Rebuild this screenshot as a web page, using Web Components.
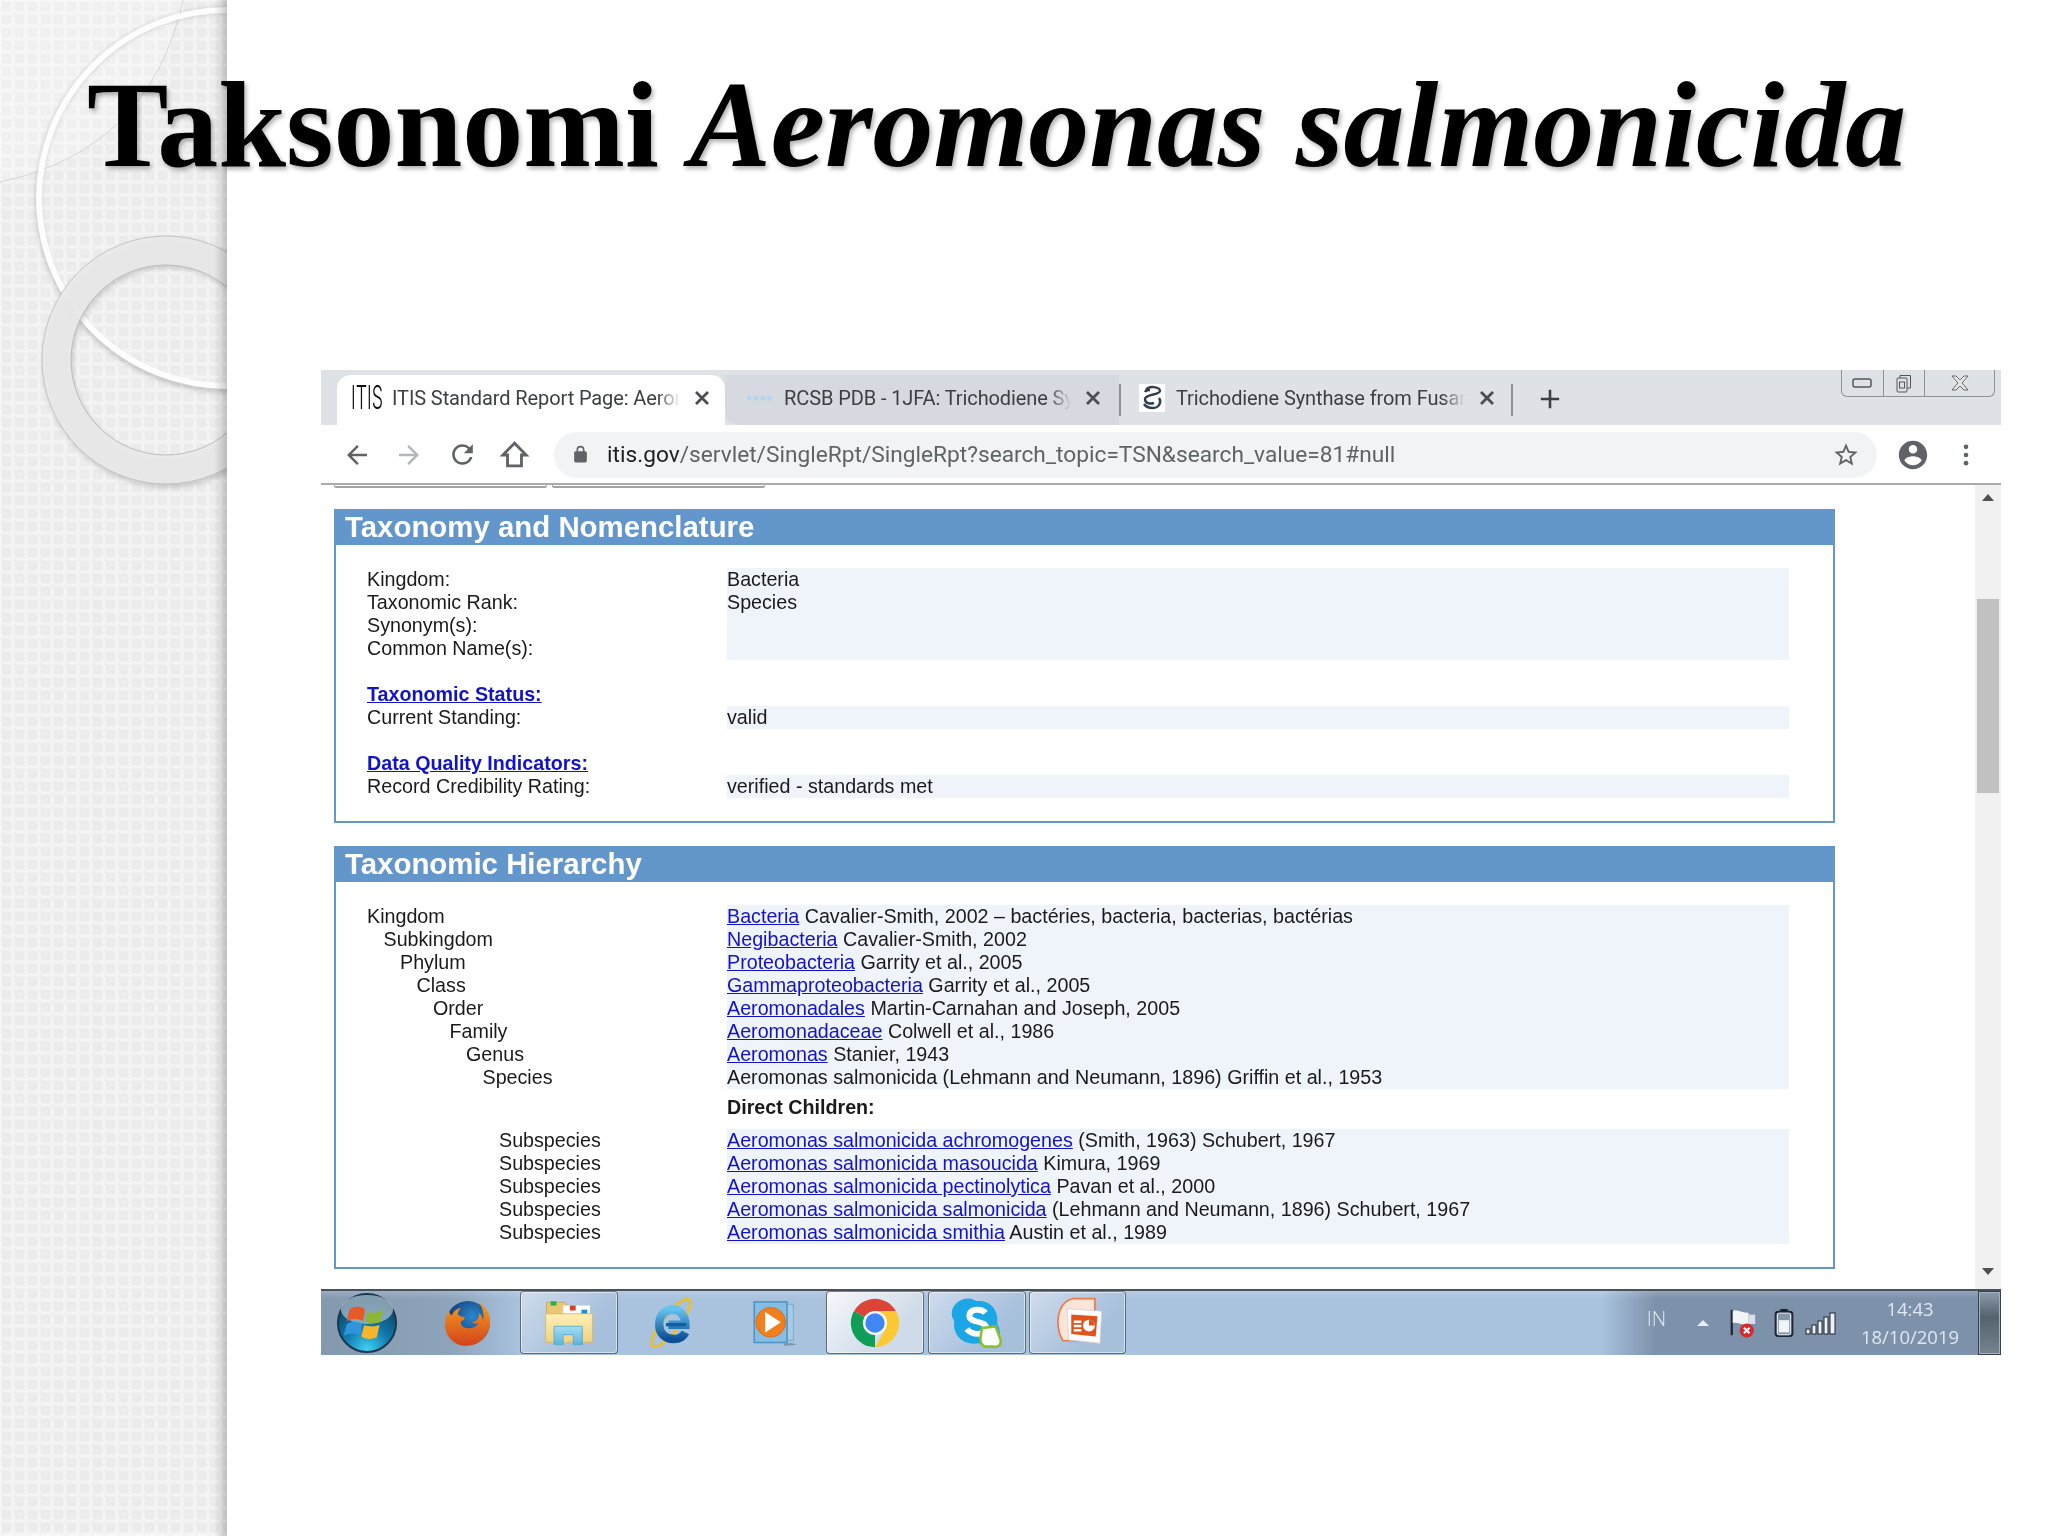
<!DOCTYPE html>
<html lang="id">
<head>
<meta charset="utf-8">
<title>Taksonomi Aeromonas salmonicida</title>
<style>
  html, body { margin: 0; background: #fff; }
</style>
</head>
<body>
<slide-page>
  <browser-window>
    <info-panel heading="Taxonomy and Nomenclature">
      <info-row label="Kingdom:" shade>Bacteria</info-row>
      <info-row label="Taxonomic Rank:" shade>Species</info-row>
      <info-row label="Synonym(s):" shade></info-row>
      <info-row label="Common Name(s):" shade></info-row>
      <info-row></info-row>
      <info-row label="Taxonomic Status:" link></info-row>
      <info-row label="Current Standing:" shade>valid</info-row>
      <info-row></info-row>
      <info-row label="Data Quality Indicators:" link></info-row>
      <info-row label="Record Credibility Rating:" shade>verified - standards met</info-row>
    </info-panel>
    <info-panel heading="Taxonomic Hierarchy">
      <info-row label="Kingdom" level="0" shade><a-link>Bacteria</a-link> Cavalier-Smith, 2002 – bactéries, bacteria, bacterias, bactérias</info-row>
      <info-row label="Subkingdom" level="1" shade><a-link>Negibacteria</a-link> Cavalier-Smith, 2002</info-row>
      <info-row label="Phylum" level="2" shade><a-link>Proteobacteria</a-link> Garrity et al., 2005</info-row>
      <info-row label="Class" level="3" shade><a-link>Gammaproteobacteria</a-link> Garrity et al., 2005</info-row>
      <info-row label="Order" level="4" shade><a-link>Aeromonadales</a-link> Martin-Carnahan and Joseph, 2005</info-row>
      <info-row label="Family" level="5" shade><a-link>Aeromonadaceae</a-link> Colwell et al., 1986</info-row>
      <info-row label="Genus" level="6" shade><a-link>Aeromonas</a-link> Stanier, 1943</info-row>
      <info-row label="Species" level="7" shade>Aeromonas salmonicida (Lehmann and Neumann, 1896) Griffin et al., 1953</info-row>
      <info-row spaced><b>Direct Children:</b></info-row>
      <info-row label="Subspecies" level="8" shade><a-link>Aeromonas salmonicida achromogenes</a-link> (Smith, 1963) Schubert, 1967</info-row>
      <info-row label="Subspecies" level="8" shade><a-link>Aeromonas salmonicida masoucida</a-link> Kimura, 1969</info-row>
      <info-row label="Subspecies" level="8" shade><a-link>Aeromonas salmonicida pectinolytica</a-link> Pavan et al., 2000</info-row>
      <info-row label="Subspecies" level="8" shade><a-link>Aeromonas salmonicida salmonicida</a-link> (Lehmann and Neumann, 1896) Schubert, 1967</info-row>
      <info-row label="Subspecies" level="8" shade><a-link>Aeromonas salmonicida smithia</a-link> Austin et al., 1989</info-row>
    </info-panel>
  </browser-window>
  <task-bar></task-bar>
</slide-page>

<script>
const GLYPHS = {
  back: '<svg viewBox="0 0 24 24" fill="#5f6368"><path d="M20 11H7.83l5.59-5.59L12 4l-8 8 8 8 1.41-1.41L7.83 13H20v-2z"/></svg>',
  forward: '<svg viewBox="0 0 24 24" fill="#b4b6b9"><path d="M4 11h12.17l-5.59-5.59L12 4l8 8-8 8-1.41-1.41L16.17 13H4v-2z"/></svg>',
  reload: '<svg viewBox="0 0 24 24" fill="#5f6368"><path d="M17.65 6.35A7.958 7.958 0 0 0 12 4c-4.42 0-7.99 3.58-7.99 8s3.57 8 7.99 8c3.73 0 6.84-2.55 7.73-6h-2.08A5.99 5.99 0 0 1 12 18c-3.31 0-6-2.69-6-6s2.69-6 6-6c1.66 0 3.14.69 4.22 1.78L13 11h7V4l-2.35 2.35z"/></svg>',
  home: '<svg viewBox="0 0 24 24" fill="none" stroke="#5f6368" stroke-width="2.200"><path d="M12 3.2 3 12.4h3.6v8.4h10.8v-8.4H21z"/></svg>',
  lock: '<svg viewBox="0 0 24 24" fill="#5f6368"><path d="M18 8h-1V6A5 5 0 0 0 7 6v2H6a2 2 0 0 0-2 2v10a2 2 0 0 0 2 2h12a2 2 0 0 0 2-2V10a2 2 0 0 0-2-2zM9 6a3 3 0 0 1 6 0v2H9V6z"/></svg>',
  star: '<svg viewBox="0 0 24 24" fill="#5f6368"><path d="M22 9.24l-7.19-.62L12 2 9.19 8.63 2 9.24l5.46 4.73L5.82 21 12 17.27 18.18 21l-1.63-7.03L22 9.24zM12 15.4l-3.76 2.27 1-4.28-3.32-2.88 4.38-.38L12 6.1l1.71 4.04 4.38.38-3.32 2.88 1 4.28L12 15.4z"/></svg>',
  profile: '<svg viewBox="0 0 24 24" fill="#5f6368"><path d="M12 2C6.48 2 2 6.48 2 12s4.48 10 10 10 10-4.48 10-10S17.52 2 12 2zm0 3c1.66 0 3 1.34 3 3s-1.34 3-3 3-3-1.34-3-3 1.34-3 3-3zm0 14.2c-2.5 0-4.71-1.28-6-3.22.03-1.99 4-3.08 6-3.08 1.99 0 5.97 1.09 6 3.08-1.29 1.94-3.5 3.22-6 3.22z"/></svg>',
  menu: '<svg viewBox="0 0 24 24" fill="#5f6368"><circle cx="12" cy="5" r="2"/><circle cx="12" cy="12" r="2"/><circle cx="12" cy="19" r="2"/></svg>',
  close: '<svg viewBox="0 0 16 16" fill="none" stroke="#4a4d52" stroke-width="2.800"><path d="M2 2l12 12M14 2L2 14"/></svg>',
  plus: '<svg viewBox="0 0 24 24" fill="none" stroke="#3c4043" stroke-width="2.800"><path d="M12 2v20M2 12h20"/></svg>',
  rcsb: '<svg viewBox="0 0 28 16"><g fill="#b5d5ee"><circle cx="4" cy="8" r="2.400"/><circle cx="11" cy="8" r="2.600"/><circle cx="18" cy="8" r="2.600"/><circle cx="24.500" cy="8" r="2.400"/></g></svg>',
  helix: '<svg viewBox="0 0 26 28"><rect width="26" height="28" fill="#fff"/><path d="M7 6C10 1 21 3 21 7s-15 3-15 8 6 5 9 4M20 14c3 4 0 10-6 10-4 0-7-1-9-4M6 8c1-2 3-2 5-2" fill="none" stroke="#2f3d4e" stroke-width="2.400"/></svg>',
  orb: `<svg viewBox="0 0 64 64"><defs><radialGradient id="o" cx=".5" cy=".95" r=".8"><stop offset="0" stop-color="#3fd0f0"/><stop offset=".5" stop-color="#1179ad"/><stop offset="1" stop-color="#0e4566"/></radialGradient></defs>
    <circle cx="32" cy="32" r="30" fill="url(#o)" stroke="#17364e" stroke-width="2"/>
    <ellipse cx="32" cy="18" rx="27" ry="15" fill="#b4c6d2" opacity=".7"/>
    <path d="M14 18c6-4 11-4 16 0l-2 12c-6-3-11-3-17 0z" fill="#e8592a"/>
    <path d="M32 20c6 2 10 2 17-2l-3 13c-6 2-11 2-16 0z" fill="#8db53a"/>
    <path d="M11 33c6-3 11-3 16 0l-2 12c-6-3-11-3-17 0z" fill="#2f96dc"/>
    <path d="M29 34c6 2 11 2 16 0l-3 13c-6 2-11 2-16-1z" fill="#f6b52a"/></svg>`,
  firefox: `<svg viewBox="0 0 64 64"><defs><radialGradient id="f" cx=".6" cy=".35" r=".6"><stop offset="0" stop-color="#2a88cf"/><stop offset="1" stop-color="#13386f"/></radialGradient><linearGradient id="g" x1="0" y1="0" x2="0" y2="1"><stop offset="0" stop-color="#f7a11d"/><stop offset="1" stop-color="#d2421c"/></linearGradient></defs>
    <circle cx="33" cy="32" r="26" fill="url(#f)"/>
    <path d="M46 7c10 7 15 16 13 28-3 16-15 24-28 24C17 59 6 48 6 34c0-7 2-13 5-17 0 3 1 5 3 6 2-5 6-8 11-9-3 3-4 6-4 8 3 2 5 3 8 3 1 2-1 4-4 5-1 3 1 7 6 8 6 1 12-1 15-6-3 1-6 1-8-1 5 0 9-5 8-11 4 3 5 7 5 10 2-9-1-17-5-23z" fill="url(#g)"/></svg>`,
  folder: `<svg viewBox="0 0 64 60"><defs><linearGradient id="y" x1="0" y1="0" x2="0" y2="1"><stop offset="0" stop-color="#fff0b8"/><stop offset="1" stop-color="#f0d27e"/></linearGradient><linearGradient id="b" x1="0" y1="0" x2="0" y2="1"><stop offset="0" stop-color="#a8def3"/><stop offset="1" stop-color="#5ab4dc"/></linearGradient></defs>
    <path d="M5 5h22l4 5h24v14H5z" fill="#e8c777" stroke="#c6a45a"/>
    <rect x="25" y="9" width="32" height="10" fill="#fff" /><rect x="10" y="4" width="7" height="5" fill="#2fae3d"/><rect x="33" y="9" width="7" height="6" fill="#d5402b"/><rect x="47" y="14" width="7" height="6" fill="#1d8fd8"/>
    <rect x="4" y="19" width="56" height="34" fill="url(#y)" stroke="#d6b766"/>
    <path d="M14 56V34h34v22h-11V44H25v12z" fill="url(#b)" stroke="#58a9cf"/></svg>`,
  ie: `<svg viewBox="0 0 64 64"><defs><linearGradient id="e" x1="0" y1="0" x2="0" y2="1"><stop offset="0" stop-color="#63c2ee"/><stop offset="1" stop-color="#0c4f95"/></linearGradient></defs>
    <ellipse cx="32" cy="32" rx="35" ry="10" fill="none" stroke="#e8bd3a" stroke-width="3.500" transform="rotate(-52 32 32)"/>
    <path d="M18 34c0-12 8-18 16-18 9 0 15 7 15 18H29M49 43c-3 6-8 8-14 8-10 0-17-7-17-17" fill="none" stroke="url(#e)" stroke-width="10"/>
    <path d="M26 32h24v4H26z" fill="#0f5ea8"/></svg>`,
  wmp: `<svg viewBox="0 0 64 64"><rect x="46" y="8" width="12" height="46" fill="#a7cbe3" stroke="#6aa5cd"/><rect x="8" y="5" width="42" height="52" fill="#86bde2" stroke="#4e95c4" stroke-width="2"/><path d="M46 58h12l4 2-16 1z" fill="#7d94a8"/>
    <circle cx="29" cy="31" r="19" fill="#f0801f" stroke="#d8620f"/><path d="M22 18l20 13-20 13z" fill="#fff"/></svg>`,
  chrome: `<svg viewBox="0 0 48 48"><path d="M6.68 14A20 20 0 0 1 41.32 14L24 14 15.34 19z" fill="#db4437"/><path d="M24 44A20 20 0 0 1 6.68 14L15.34 19 24 34z" fill="#0f9d58"/><path d="M41.32 14A20 20 0 0 1 24 44L32.66 29 24 14z" fill="#fcc934"/><circle cx="24" cy="24" r="10" fill="#f4f6f8"/><circle cx="24" cy="24" r="8" fill="#4285f4"/></svg>`,
  skype: `<svg viewBox="0 0 64 64"><path d="M22 3c4 0 7 2 9 3 16-2 27 10 25 27 2 4 3 7 3 10 0 9-7 16-16 16-3 0-6-1-9-3C16 59 3 47 5 30c-2-4-3-6-3-9C2 11 11 3 22 3z" fill="#1ba6e6"/>
    <path d="M42 20c-4-5-18-6-19 3-1 10 20 5 20 15 0 9-17 9-23 1" fill="none" stroke="#fff" stroke-width="7"/>
    <path d="M38 38l16-2 6 16c1 6-3 9-8 8H42c-4-1-6-5-6-10z" fill="#fff" stroke="#8cc02b" stroke-width="3"/></svg>`,
  ppt: `<svg viewBox="0 0 64 64"><path d="M10 44C5 25 11 6 26 3h26v50H14z" fill="#fbe4d8" stroke="#ea7a4c" stroke-width="2"/><path d="M19 15l41 3-2 38-37-4z" fill="#fff" stroke="#cfd2d4"/>
    <path d="M24 22l31 2-2 24-29-3z" fill="#e2521d"/><path d="M27 29h9v3h-9zM27 34h9v3h-9zM27 39h9v3h-9z" fill="#fff"/><circle cx="45" cy="35" r="7" fill="#fff"/><path d="M45 35v-7a7 7 0 0 1 7 7z" fill="#e2521d"/></svg>`,
  flag: `<svg viewBox="0 0 32 32"><path d="M4 2v27" stroke="#1c2733" stroke-width="2.400"/><path d="M5 3c6-2 10 3 17 2v13c-7 1-11-3-17-2z" fill="#f1f4f7"/><path d="M22 7h7v10h-7z" fill="#d8dfe6"/><circle cx="20" cy="24" r="7.500" fill="#d42b2b"/><path d="M17 21l6 6M23 21l-6 6" stroke="#fff" stroke-width="2.200"/></svg>`,
  battery: '<svg viewBox="0 0 22 32"><rect x="7" y="1" width="8" height="3" fill="#1c2733"/><rect x="2" y="4" width="18" height="26" rx="3" fill="#8397ac" stroke="#1c2733" stroke-width="2"/><rect x="4" y="5.500" width="14" height="23" rx="2" fill="none" stroke="#e7ecf2" stroke-width="1"/><rect x="5.500" y="13" width="11" height="13" fill="#f2f5f8"/></svg>',
  signal: '<svg viewBox="0 0 32 24"><g fill="#eef2f6" stroke="#1c2733"><rect x="1" y="18" width="4" height="5"/><rect x="7" y="14" width="4" height="9"/><rect x="13" y="10" width="4" height="13"/><rect x="19" y="6" width="4" height="17"/><rect x="25" y="2" width="5" height="21"/></g></svg>',
  restore: '<svg viewBox="0 0 16 20" fill="none" stroke="#555"><rect x="1" y="5" width="10" height="14" rx="1"/><path d="M4 5V2.500h10.500V15H11"/><rect x="3.500" y="9" width="5" height="6"/></svg>',
  minimize: '<svg viewBox="0 0 20 10" fill="none" stroke="#555" stroke-width="1.500"><rect x="1" y="1" width="18" height="8" rx="2"/></svg>',
  winclose: '<svg viewBox="0 0 20 16" fill="#e6e8ec" stroke="#666"><path d="M2 1h4l4 4 4-4h4l-6 7 6 7h-4l-4-4-4 4H2l6-7z"/></svg>'
};

class AppIcon extends HTMLElement {
  connectedCallback() {
    const root = this.shadowRoot || this.attachShadow({ mode: "open" });
    const w = this.getAttribute("w") || 24;
    const h = this.getAttribute("h") || w;
    root.innerHTML = `<style>
      :host { display: block; width: ${w}px; height: ${h}px; flex: none; }
      svg { display: block; width: 100%; height: 100%; }
    </style>${GLYPHS[this.getAttribute("name")]}`;
  }
}
customElements.define("app-icon", AppIcon);

class SideArt extends HTMLElement {
  constructor() {
    super();
    this.attachShadow({ mode: "open" });
    this.shadowRoot.innerHTML = `
      <style>
        :host { display: block; width: 227px; height: 100%; }
        svg { display: block; width: 227px; height: 100%; }
      </style>
      <svg viewBox="0 0 227 1536" preserveAspectRatio="none">
        <defs>
          <pattern id="cells" width="13" height="13" patternUnits="userSpaceOnUse">
            <rect width="13" height="13" fill="#f5f5f5"/>
            <rect x="2" y="2" width="9" height="9" fill="#e6e6e6"/>
            <rect x="4" y="4" width="5" height="5" fill="#f3f3f3"/>
            <rect x="5.500" y="5.500" width="2" height="2" fill="#e0e0e0"/>
            <rect x="0" y="0" width="2" height="2" fill="#e9e9e9"/>
          </pattern>
          <linearGradient id="edge" x1="0" x2="1" y1="0" y2="0">
            <stop offset="0" stop-color="#000" stop-opacity="0"/>
            <stop offset="1" stop-color="#000" stop-opacity=".2"/>
          </linearGradient>
          <filter id="soft" x="-20%" y="-20%" width="140%" height="140%"><feGaussianBlur stdDeviation="2.500"/></filter>
          <filter id="haze" x="0" y="0" width="100%" height="100%"><feGaussianBlur stdDeviation=".8"/></filter>
        </defs>
        <rect width="227" height="1536" fill="url(#cells)" filter="url(#haze)"/>
        <path d="M0 0H183Q150 150 0 182z" fill="#fff" opacity=".22"/>
        <path d="M183 0Q150 150 0 182" fill="none" stroke="#d6d6d6"/>
        <circle cx="228" cy="200" r="190" fill="none" stroke="#777" stroke-width="4" opacity=".5" filter="url(#soft)"/>
        <circle cx="227" cy="198" r="188" fill="none" stroke="#fdfdfd" stroke-width="6"/>
        <circle cx="168" cy="363" r="110" fill="none" stroke="#777" stroke-width="30" opacity=".3" filter="url(#soft)"/>
        <circle cx="166" cy="360" r="109.500" fill="none" stroke="#e9e9e9" stroke-width="29" opacity=".92"/>
        <circle cx="166" cy="360" r="124" fill="none" stroke="#c4c4c4"/>
        <circle cx="166" cy="360" r="95" fill="none" stroke="#bdbdbd"/>
        <rect x="214" width="13" height="1536" fill="url(#edge)"/>
      </svg>`;
  }
}
customElements.define("side-art", SideArt);

class SlidePage extends HTMLElement {
  constructor() {
    super();
    this.attachShadow({ mode: "open" });
    this.shadowRoot.innerHTML = `
      <style>
        :host { display: grid; width: 2048px; height: 1536px; background: #fff; overflow: hidden; }
        side-art, .content { grid-area: 1 / 1; }
        .content { display: flex; flex-direction: column; }
        h1 {
          margin: 0; height: 370px; padding: 50px 0 0 87px; box-sizing: border-box;
          font: bold 122px/150px "Liberation Serif", "Times New Roman", serif;
          color: #000; white-space: nowrap;
          text-shadow: 2px 3px 4px rgba(0, 0, 0, .3);
        }
        h1 i { font-style: italic; }
        .desk { margin: 0 47px 0 321px; display: flex; flex-direction: column; filter: blur(.4px); }
      </style>
      <side-art></side-art>
      <div class="content">
        <h1>Taksonomi <i>Aeromonas salmonicida</i></h1>
        <div class="desk"><slot></slot></div>
      </div>`;
  }
}
customElements.define("slide-page", SlidePage);

class ChromeTab extends HTMLElement {
  constructor() {
    super();
    this.attachShadow({ mode: "open" });
    this.shadowRoot.innerHTML = `
      <style>
        :host {
          display: flex; align-items: center; box-sizing: border-box; height: 50px; padding-bottom: 5px;
          align-self: flex-end; color: #3c4043;
          font: 20px/26px Roboto, "Liberation Sans", sans-serif;
        }
        :host([active]) { background: #fff; border-radius: 14px 14px 0 0; }
        :host([tone]) { background: #d6d9e0; border-radius: 0 0 0 14px; }
        .title {
          flex: 1; min-width: 0; white-space: nowrap; letter-spacing: -.1px;
          -webkit-mask-image: linear-gradient(to right, #000 92%, transparent);
          mask-image: linear-gradient(to right, #000 92%, transparent);
          margin: 0 14px 0 11px;
        }
        .x { margin-right: var(--x-gap, 15px); }
      </style>
      <slot></slot>
      <span class="title"></span>
      <app-icon class="x" name="close" w="16"></app-icon>`;
  }
  connectedCallback() {
    this.shadowRoot.querySelector(".title").textContent = this.getAttribute("text");
  }
}
customElements.define("chrome-tab", ChromeTab);

class BrowserWindow extends HTMLElement {
  constructor() {
    super();
    this.attachShadow({ mode: "open" });
    this.shadowRoot.innerHTML = `
      <style>
        :host { display: flex; flex-direction: column; height: 919px; background: #fff; }
        .strip { display: flex; height: 55px; flex: none; background: #dee1e6; padding-left: 16px; box-sizing: border-box; }
        .sep { width: 2px; height: 32px; background: #8d9096; align-self: center; margin-top: 4px; flex: none; }
        .itis { width: 30px; flex: none; margin-left: 14px; font: 300 32px/44px Inter, sans-serif; color: #111; transform: scaleX(.56); transform-origin: left center; white-space: nowrap; }
        .plus { margin: 3px 0 0 26px; align-self: center; }
        .win {
          display: flex; margin-left: auto; margin-right: 6px; height: 26px; width: 152px; flex: none;
          border: 1px solid #8f9196; border-top: 0; border-radius: 0 0 6px 6px; box-sizing: content-box;
        }
        .win span { display: flex; flex: 1; align-items: center; justify-content: center; }
        .win span + span { border-left: 1px solid #8f9196; }
        .win .wide { flex: 1.700; }
        .bar {
          display: flex; align-items: center; height: 60px; flex: none; box-sizing: border-box;
          border-bottom: 2px solid #a9abae; background: #fff; padding: 1px 0 0 21px;
        }
        .bar > app-icon { margin-right: 22px; }
        .omni {
          display: flex; align-items: center; height: 46px; width: 1323px; flex: none; margin: 0 0 0 2px;
          border-radius: 23px; background: #f1f3f4; box-sizing: border-box; padding: 0 17px 0 17px;
        }
        .url { flex: 1; margin-left: 17px; font: 22.700px/46px Roboto, "Liberation Sans", sans-serif; color: #5f6368; white-space: nowrap; }
        .url b { font-weight: 400; color: #202124; }
        .main { flex: 1; display: flex; min-height: 0; }
        .page { flex: 1; min-width: 0; overflow: hidden; padding: 0 0 0 13px; }
        .cut { display: flex; gap: 5px; height: 3px; }
        .cut i { display: block; width: 213px; border: 1px solid #a4a4a4; border-top: 0; border-bottom-width: 2px; box-sizing: border-box; border-radius: 0 0 2px 2px; }
        .stack { display: flex; flex-direction: column; gap: 23px; width: 1501px; padding-top: 21px; }
        .scroll { width: 26px; flex: none; background: #f1f1f1; display: flex; flex-direction: column; align-items: center; }
        .tri { width: 0; height: 0; border: 6px solid transparent; margin-top: 9px; border-bottom: 7px solid #505050; border-top: 0; }
        .tri.down { border-bottom: 0; border-top: 7px solid #505050; margin-top: 0; }
        .thumb { width: 22px; height: 194px; background: #c1c1c1; margin: 98px 0 475px; }
      </style>
      <div class="strip">
        <chrome-tab active text="ITIS Standard Report Page: Aeror" style="width:388px"><span class="itis">ITIS</span></chrome-tab>
        <chrome-tab tone text="RCSB PDB - 1JFA: Trichodiene Sy" style="width:394px;padding-left:20px;--x-gap:18px"><app-icon name="rcsb" w="28" h="16"></app-icon></chrome-tab>
        <span class="sep"></span>
        <chrome-tab text="Trichodiene Synthase from Fusar" style="width:390px;padding-left:18px;--x-gap:16px"><app-icon name="helix" w="26" h="28"></app-icon></chrome-tab>
        <span class="sep"></span>
        <app-icon class="plus" name="plus" w="22"></app-icon>
        <div class="win">
          <span><app-icon name="minimize" w="20" h="10"></app-icon></span>
          <span><app-icon name="restore" w="16" h="20"></app-icon></span>
          <span class="wide"><app-icon name="winclose" w="20" h="16"></app-icon></span>
        </div>
      </div>
      <div class="bar">
        <app-icon name="back" w="30"></app-icon>
        <app-icon name="forward" w="30"></app-icon>
        <app-icon name="reload" w="31" style="margin-right:21px;margin-left:1px"></app-icon>
        <app-icon name="home" w="31"></app-icon>
        <div class="omni">
          <app-icon name="lock" w="19"></app-icon>
          <span class="url"><b>itis.gov</b>/servlet/SingleRpt/SingleRpt?search_topic=TSN&amp;search_value=81#null</span>
          <app-icon name="star" w="28"></app-icon>
        </div>
        <app-icon name="profile" w="34" style="margin:0 0 0 19px"></app-icon>
        <app-icon name="menu" w="28" style="margin:0 0 0 22px"></app-icon>
      </div>
      <div class="main">
        <div class="page">
          <div class="cut"><i></i><i></i></div>
          <div class="stack"><slot></slot></div>
        </div>
        <div class="scroll">
          <span class="tri"></span>
          <span class="thumb"></span>
          <span class="tri down"></span>
        </div>
      </div>`;
  }
}
customElements.define("browser-window", BrowserWindow);

class InfoPanel extends HTMLElement {
  constructor() {
    super();
    this.attachShadow({ mode: "open" });
    this.shadowRoot.innerHTML = `
      <style>
        :host { display: block; border: 2px solid #6396cb; border-top: 0; background: #fff; }
        h2 {
          margin: 0 -2px; height: 36px; padding-left: 11px; background: #6396cb; color: #fff;
          font: bold 29.400px/36px "Liberation Sans", Arial, sans-serif;
        }
        .rows { padding: 23px 0 23px 31px; margin-right: 44px; }
      </style>
      <h2></h2>
      <div class="rows"><slot></slot></div>`;
  }
  connectedCallback() {
    this.shadowRoot.querySelector("h2").textContent = this.getAttribute("heading");
  }
}
customElements.define("info-panel", InfoPanel);

class InfoRow extends HTMLElement {
  constructor() {
    super();
    this.attachShadow({ mode: "open" });
    this.shadowRoot.innerHTML = `
      <style>
        :host {
          display: grid; grid-template-columns: 360px 1fr; height: 23px;
          font: 19.700px/23px "Liberation Sans", Arial, sans-serif; color: #1a1a1a; white-space: nowrap;
        }
        :host([spaced]) { margin: 7px 0 10px; }
        .val { min-width: 0; }
        :host([shade]) .val { background: #eff3fa; }
        .lab { padding-left: calc(var(--level, 0) * 16.5px); }
        :host([link]) .lab { color: #1212c8; font-weight: bold; text-decoration: underline; }
      </style>
      <span class="lab"></span>
      <span class="val"><slot></slot></span>`;
  }
  connectedCallback() {
    this.shadowRoot.querySelector(".lab").textContent = this.getAttribute("label") || "";
    this.style.setProperty("--level", this.getAttribute("level") || 0);
  }
}
customElements.define("info-row", InfoRow);

class ALink extends HTMLElement {
  constructor() {
    super();
    this.attachShadow({ mode: "open" });
    this.shadowRoot.innerHTML = `
      <style>:host { color: #1212c8; text-decoration: underline; }</style>
      <slot></slot>`;
  }
}
customElements.define("a-link", ALink);

class TaskBar extends HTMLElement {
  constructor() {
    super();
    this.attachShadow({ mode: "open" });
    this.shadowRoot.innerHTML = `
      <style>
        :host {
          display: flex; gap: 4px; height: 66px; box-sizing: border-box; align-items: stretch;
          border-top: 2px solid #47525e;
          background:
            linear-gradient(to bottom, rgba(255,255,255,.18), rgba(255,255,255,0) 8px),
            linear-gradient(to right, #8499ae 0, #8ea4ba 130px, #a9c2de 200px, #a9c2de 1280px, #7d91aa 1335px, #7d91aa 100%);
        }
        .slot { width: 98px; display: flex; align-items: center; justify-content: center; flex: none; box-sizing: border-box; }
        .start { width: 91px; margin-right: 2px; }
        .last { margin-left: -1px; width: 97px; }
        .on {
          border: 1px solid #5c6a79; border-top-color: #6e7d8d; border-radius: 4px; margin-bottom: 1px;
          background: linear-gradient(135deg, #cfdced, #a6bfdb 70%);
          box-shadow: inset 0 0 0 1px rgba(255,255,255,.55);
        }
        .hot { background: linear-gradient(135deg, #f6f8fb, #cfdbe9 70%); }
        .tray {
          margin-left: auto; display: flex; align-items: center; color: #dfe8f2;
          font: 18.500px/1 "Open Sans", "Liberation Sans", sans-serif;
        }
        .in { width: 40px; text-align: center; margin-top: -8px; font-size: 20px; font-weight: 300; }
        .up { width: 0; height: 0; border: 6px solid transparent; border-top: 0; border-bottom: 6px solid #e9eef4; margin: 0 7px 0 20px; }
        .clock { width: 120px; margin-left: 13px; text-align: center; line-height: 28px; }
        .show {
          width: 23px; align-self: stretch; margin-left: 8px; box-sizing: border-box;
          border: 1px solid #39434e; box-shadow: inset 0 0 0 1px #9fb0c2;
          background: linear-gradient(to bottom, #8d9cab, #55626f 40%, #76848f);
        }
      </style>
      <span class="slot start"><app-icon name="orb" w="62"></app-icon></span>
      <span class="slot"><app-icon name="firefox" w="54"></app-icon></span>
      <span class="slot on"><app-icon name="folder" w="54" h="50"></app-icon></span>
      <span class="slot"><app-icon name="ie" w="54"></app-icon></span>
      <span class="slot"><app-icon name="wmp" w="50"></app-icon></span>
      <span class="slot on hot"><app-icon name="chrome" w="58"></app-icon></span>
      <span class="slot on"><app-icon name="skype" w="54"></app-icon></span>
      <span class="slot on last"><app-icon name="ppt" w="54"></app-icon></span>
      <div class="tray">
        <span class="in">IN</span>
        <span class="up"></span>
        <app-icon name="flag" w="30" style="margin-left:12px"></app-icon>
        <app-icon name="battery" w="22" h="30" style="margin-left:15px"></app-icon>
        <app-icon name="signal" w="32" h="24" style="margin-left:10.5px"></app-icon>
        <span class="clock">14:43<br>18/10/2019</span>
        <span class="show"></span>
      </div>`;
  }
}
customElements.define("task-bar", TaskBar);
</script>
</body>
</html>
